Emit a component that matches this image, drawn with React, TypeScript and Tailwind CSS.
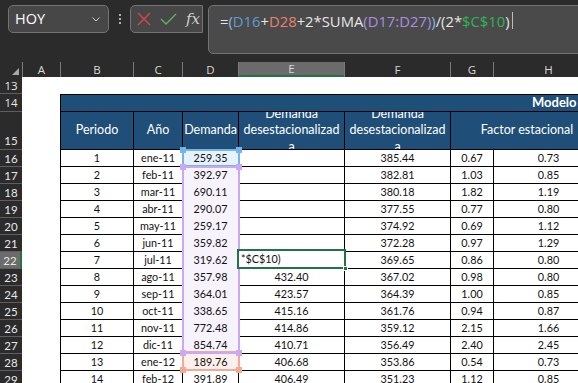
import React from 'react';

type Col = { key: string; w: string };

const COLS: Col[] = [
  { key: 'A', w: 'w-[38px]' },
  { key: 'B', w: 'w-[73px]' },
  { key: 'C', w: 'w-[49px]' },
  { key: 'D', w: 'w-[56px]' },
  { key: 'E', w: 'w-[106px]' },
  { key: 'F', w: 'w-[106px]' },
  { key: 'G', w: 'w-[43px]' },
  { key: 'H', w: 'w-[110px]' },
];

// [row, periodo, año, demanda, desest. E, desest. F, G, H]
const DATA: string[][] = [
  ['16', '1', 'ene-11', '259.35', '', '385.44', '0.67', '0.73'],
  ['17', '2', 'feb-11', '392.97', '', '382.81', '1.03', '0.85'],
  ['18', '3', 'mar-11', '690.11', '', '380.18', '1.82', '1.19'],
  ['19', '4', 'abr-11', '290.07', '', '377.55', '0.77', '0.80'],
  ['20', '5', 'may-11', '259.17', '', '374.92', '0.69', '1.12'],
  ['21', '6', 'jun-11', '359.82', '', '372.28', '0.97', '1.29'],
  ['22', '7', 'jul-11', '319.62', '', '369.65', '0.86', '0.80'],
  ['23', '8', 'ago-11', '357.98', '432.40', '367.02', '0.98', '0.80'],
  ['24', '9', 'sep-11', '364.01', '423.57', '364.39', '1.00', '0.85'],
  ['25', '10', 'oct-11', '338.65', '415.16', '361.76', '0.94', '0.87'],
  ['26', '11', 'nov-11', '772.48', '414.86', '359.12', '2.15', '1.66'],
  ['27', '12', 'dic-11', '854.74', '410.71', '356.49', '2.40', '2.45'],
  ['28', '13', 'ene-12', '189.76', '406.68', '353.86', '0.54', '0.73'],
  ['29', '14', 'feb-12', '391.89', '406.49', '351.23', '1.12', '0.85'],
];

const dShade = (row: number) => {
  if (row === 16) return 'bg-[#e8f2fc]';
  if (row === 28) return 'bg-[#fdf0ec]';
  if (row > 16 && row < 28) return 'bg-[#f7f3fd]';
  return 'bg-white border-b border-black';
};

const RowHead: React.FC<{ n: string; active?: boolean; bottom?: boolean }> = ({ n, active, bottom }) => (
  <div
    className={`w-[22px] shrink-0 h-full flex justify-center border-b border-[#5e5e5e] text-[11.5px] leading-[15px] text-[#e8e8e8] ${
      bottom ? 'items-end pb-[1px]' : 'items-center'
    } ${active ? 'bg-[#6b6b6b] border-r-2 border-r-[#217346]' : 'bg-[#2b2b2b]'}`}
  >
    {n}
  </div>
);

const Cell: React.FC<{ w: string; className?: string; children?: React.ReactNode }> = ({ w, className = '', children }) => (
  <div className={`${w} shrink-0 h-full border-l border-black flex items-center justify-center whitespace-nowrap ${className}`}>
    {children}
  </div>
);

const Corners: React.FC<{ color: string; top?: boolean; bottom?: boolean }> = ({ color, top = true, bottom = true }) => (
  <>
    {top && <div className={`absolute -left-[4px] -top-[4px] w-[6px] h-[6px] ${color}`} />}
    {top && <div className={`absolute -right-[4px] -top-[4px] w-[6px] h-[6px] ${color}`} />}
    {bottom && <div className={`absolute -left-[4px] -bottom-[4px] w-[6px] h-[6px] ${color}`} />}
    {bottom && <div className={`absolute -right-[4px] -bottom-[4px] w-[6px] h-[6px] ${color}`} />}
  </>
);

const TopBar = () => (
  <div className="h-[62px] shrink-0 flex items-start pt-[5px] pl-[8px]">
    {/* Name box */}
    <div className="w-[101px] h-[28px] shrink-0 rounded-[5px] border border-[#737373] bg-[#474747] flex items-center justify-between pl-[6px] pr-[8px]">
      <span className="text-[14.5px] text-white">HOY</span>
      <svg width="8" height="5" viewBox="0 0 8 5">
        <polyline points="0.5,0.5 4,4 7.5,0.5" fill="none" stroke="#d0d0d0" strokeWidth="1" />
      </svg>
    </div>
    <div className="w-[21px] h-[28px] shrink-0 flex items-center justify-center">
      <svg width="4" height="12" viewBox="0 0 4 12">
        <circle cx="2" cy="2" r="1.1" fill="#d0d0d0" />
        <circle cx="2" cy="6" r="1.1" fill="#d0d0d0" />
        <circle cx="2" cy="10" r="1.1" fill="#d0d0d0" />
      </svg>
    </div>
    {/* cancel / enter / fx */}
    <div className="w-[73px] h-[28px] shrink-0 rounded-l-[5px] border border-[#737373] bg-[#474747] flex items-center pl-[6px] gap-[9px]">
      <svg width="14" height="14" viewBox="0 0 14 14">
        <path d="M1 1 L13 13 M13 1 L1 13" stroke="#e0464c" strokeWidth="1.3" />
      </svg>
      <svg width="17" height="12" viewBox="0 0 17 12">
        <polyline points="1,6 6,11 16,1" fill="none" stroke="#5cb860" strokeWidth="1.3" />
      </svg>
      <span className="text-[15px] italic text-[#d0d0d0] font-[family-name:'DejaVu_Serif',serif] leading-none">fx</span>
    </div>
    {/* Formula */}
    <div className="ml-[5px] w-[400px] h-[49px] shrink-0 rounded-[5px] border border-[#737373] bg-[#4a4a4a] pl-[11px] pt-[5px] text-[14.8px] leading-[20px] text-[#e6e6e6] whitespace-nowrap flex items-start">
      <span>=</span>
      <span className="text-[#86b8e8]">(</span>
      <span className="text-[#5b9bd5]">D16</span>
      <span>+</span>
      <span className="text-[#e8826b]">D28</span>
      <span>+2*SUMA</span>
      <span className="text-[#a98fe0]">(</span>
      <span className="text-[#a98fe0]">D17:D27</span>
      <span className="text-[#a98fe0]">)</span>
      <span className="text-[#86b8e8]">)</span>
      <span>/(2*</span>
      <span className="text-[#2fb556]">$C$10</span>
      <span>)</span>
      <span className="ml-[2px] mt-[1px] w-px h-[17px] bg-[#bdbdbd]" />
    </div>
  </div>
);

const ColumnHeaders = () => (
  <div className="h-[15px] shrink-0 flex bg-[#2b2b2b] text-[11.5px] text-[#d9d9d9] leading-none">
    <div className="w-[22px] shrink-0 flex items-end justify-end pr-[3px] pb-[2px]">
      <svg width="7" height="7" viewBox="0 0 7 7">
        <polygon points="7,0 7,7 0,7" fill="#a8a8a8" />
      </svg>
    </div>
    {COLS.map((c) => (
      <div
        key={c.key}
        className={`${c.w} shrink-0 border-l border-[#7a7a7a] flex items-center justify-center ${
          c.key === 'E' ? 'bg-[#6b6b6b] border-b-2 border-b-[#217346]' : ''
        }`}
      >
        {c.key}
      </div>
    ))}
  </div>
);

const HeaderWrap: React.FC<{ w: string }> = ({ w }) => (
  <Cell w={w} className="bg-[#1f4e78] border-b overflow-hidden">
    <div className="text-center leading-[16.5px]">
      Demanda
      <br />
      desestacionalizad
      <br />a
    </div>
  </Cell>
);

const Sheet = () => (
  <div className="flex-1 flex flex-col bg-white overflow-hidden">
    {/* row 13 */}
    <div className="h-[17px] shrink-0 flex">
      <RowHead n="13" />
      <div className="flex-1" />
    </div>
    {/* row 14 */}
    <div className="h-[18px] shrink-0 flex">
      <RowHead n="14" />
      <div className="w-[38px] shrink-0" />
      <div className="flex-1 bg-[#1f4e78] border-t border-b border-l border-black flex items-center pl-[471px] text-[13px] font-bold text-white whitespace-nowrap font-[family-name:Lato,sans-serif]">
        Modelo
      </div>
    </div>
    {/* row 15 */}
    <div className="h-[38px] shrink-0 flex text-white text-[12.5px] font-[family-name:Lato,sans-serif]">
      <RowHead n="15" bottom />
      <div className="w-[38px] shrink-0" />
      <Cell w="w-[73px]" className="bg-[#1f4e78] border-b">Periodo</Cell>
      <Cell w="w-[49px]" className="bg-[#1f4e78] border-b">Año</Cell>
      <Cell w="w-[56px]" className="bg-[#1f4e78] border-b">Demanda</Cell>
      <HeaderWrap w="w-[106px]" />
      <HeaderWrap w="w-[106px]" />
      <Cell w="w-[153px]" className="bg-[#1f4e78] border-b">Factor estacional</Cell>
    </div>
    {/* data */}
    <div className="relative flex flex-col text-[10.8px] text-[#111] font-[family-name:Lato,sans-serif]">
      {DATA.map((r) => {
        const row = Number(r[0]);
        return (
          <div key={r[0]} className="h-[17px] shrink-0 flex">
            <RowHead n={r[0]} active={row === 22} />
            <div className="w-[38px] shrink-0" />
            <Cell w="w-[73px]" className="border-b">{r[1]}</Cell>
            <Cell w="w-[49px]" className="border-b">{r[2]}</Cell>
            <Cell w="w-[56px]" className={dShade(row)}>{r[3]}</Cell>
            <Cell w="w-[106px]" className="border-b">{r[4]}</Cell>
            <Cell w="w-[106px]" className="border-b">{r[5]}</Cell>
            <Cell w="w-[43px]" className="border-b">{r[6]}</Cell>
            <Cell w="w-[110px]" className="border-b">{r[7]}</Cell>
          </div>
        );
      })}

      {/* formula range highlights */}
      <div className="absolute left-[182px] top-[-1px] w-[58px] h-[18px] border-2 border-[#74b4ec]">
        <Corners color="bg-[#74b4ec]" bottom={false} />
      </div>
      <div className="absolute left-[182px] top-[201px] w-[58px] h-[20px] border-2 border-[#f4a995]">
        <Corners color="bg-[#f4a995]" top={false} />
      </div>
      <div className="absolute left-[182px] top-[16px] w-[58px] h-[188px] border-2 border-[#caa8f4]">
        <Corners color="bg-[#caa8f4]" />
      </div>

      {/* active cell E22 in edit mode */}
      <div className="absolute left-[237px] top-[99px] w-[109px] h-[20px] border-2 border-[#217346] bg-white flex items-center pl-[2px] whitespace-nowrap">
        *$C$10)
        <div className="absolute -right-[4px] -bottom-[4px] w-[5px] h-[5px] bg-[#217346] border border-white" />
      </div>
    </div>
  </div>
);

export default function App() {
  return (
    <div className="w-[578px] h-[383px] overflow-hidden bg-[#2b2b2b] flex flex-col font-[family-name:'Open_Sans',sans-serif]">
      <TopBar />
      <ColumnHeaders />
      <Sheet />
    </div>
  );
}
